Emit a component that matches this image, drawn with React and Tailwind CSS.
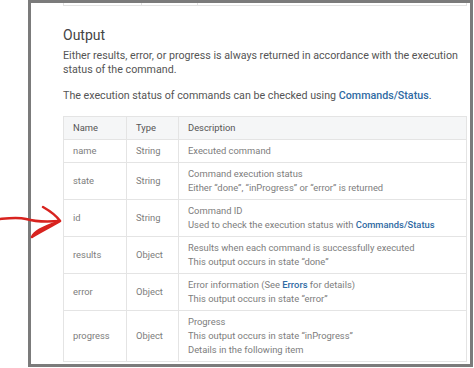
import React from 'react';

const rows = [
  { name: 'name', type: 'String', desc: ['Executed command'] },
  { name: 'state', type: 'String', desc: ['Command execution status', 'Either “done”, “inProgress” or “error” is returned'] },
  {
    name: 'id',
    type: 'String',
    desc: ['Command ID', <>Used to check the execution status with <a className="text-[#2f6aa3] font-medium">Commands/Status</a></>],
  },
  { name: 'results', type: 'Object', desc: ['Results when each command is successfully executed', 'This output occurs in state “done”'] },
  {
    name: 'error',
    type: 'Object',
    desc: [<>Error information (See <a className="text-[#2f6aa3] font-medium">Errors</a> for details)</>, 'This output occurs in state “error”'],
  },
  { name: 'progress', type: 'Object', desc: ['Progress', 'This output occurs in state “inProgress”', 'Details in the following item'] },
];

function Arrow() {
  return (
    <svg className="absolute left-0 top-[204px]" width="66" height="38" viewBox="0 204 66 38">
      <g fill="none" stroke="#d8231f" strokeWidth="2.5" strokeLinecap="round" strokeLinejoin="round">
        <path d="M0 219 C10 218 18 217 26 219 C36 222 46 222 60 221" />
        <path d="M43 207 C50 211 56 215 60 221 C52 226 40 232 32 237 C34 232 46 226 58 222" />
      </g>
    </svg>
  );
}

export default function App() {
  return (
    <div className="relative w-[474px] h-[368px] bg-white overflow-hidden" style={{ fontFamily: 'Roboto, "Liberation Sans", sans-serif' }}>
      <div className="ml-[28px] w-[445px] h-[367px] border-[3px] border-[#7b7b7b] bg-white overflow-hidden">
        <div className="ml-[32px] mr-[3px] h-[4px] -mt-[1px] border-x border-b border-[#e3e3e3] grid grid-cols-[78px_56px_1fr]">
          <div className="border-r border-[#e3e3e3]" />
          <div className="border-r border-[#e3e3e3]" />
          <div />
        </div>
        <div className="pl-[32px] pr-[3px] pt-[19px]">
          <h2 className="text-[14px] leading-[20px] text-[#444]">Output</h2>
          <p className="mt-[4px] pr-[8px] text-[10.7px] leading-[14px] text-[#555]">
            Either results, error, or progress is always returned in accordance with the execution status of the command.
          </p>
          <p className="mt-[12px] text-[10.7px] leading-[14px] text-[#555]">
            The execution status of commands can be checked using <a className="text-[#2f6aa3] font-medium">Commands/Status</a>.
          </p>
          <table className="mt-[13px] w-full border-collapse text-[9.4px] leading-[14px]">
            <thead>
              <tr className="bg-[#f5f6f7] text-[#555]">
                <th className="w-[63px] h-[23px] border border-[#e4e4e4] px-[9px] text-left font-normal">Name</th>
                <th className="w-[52px] border border-[#e4e4e4] px-[9px] text-left font-normal">Type</th>
                <th className="border border-[#e4e4e4] px-[9px] text-left font-normal">Description</th>
              </tr>
            </thead>
            <tbody className="text-[#7d7d7d]">
              {rows.map((r) => (
                <tr key={r.name}>
                  <td className="border border-[#e4e4e4] px-[9px] py-[4px] align-middle">{r.name}</td>
                  <td className="border border-[#e4e4e4] px-[9px] py-[4px] align-middle">{r.type}</td>
                  <td className="border border-[#e4e4e4] px-[9px] py-[4px] align-middle">
                    {r.desc.map((d, i) => (
                      <div key={i}>{d}</div>
                    ))}
                  </td>
                </tr>
              ))}
            </tbody>
          </table>
        </div>
      </div>
      <Arrow />
    </div>
  );
}
